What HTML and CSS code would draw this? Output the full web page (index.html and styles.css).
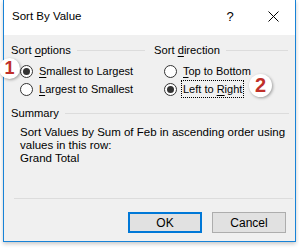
FILE: index.html
```html
<!DOCTYPE html>
<html>
<head>
<meta charset="utf-8">
<link rel="stylesheet" href="styles.css">
</head>
<body>
<div class="window">
  <div class="titlebar">
    <span class="title">Sort By Value</span>
    <span class="help">?</span>
    <span class="close">
      <svg width="11" height="11" viewBox="0 0 11 11"><path d="M0.5 0.5 L10.5 10.5 M10.5 0.5 L0.5 10.5" stroke="#000" stroke-width="1" fill="none"/></svg>
    </span>
  </div>
  <div class="content">
    <div class="groups">
      <div class="group">
        <div class="group-head"><span>Sort <u>o</u>ptions</span><i class="rule"></i></div>
        <div class="radio-row checked"><span class="radio"></span><span class="label"><u>S</u>mallest to Largest</span></div>
        <div class="radio-row"><span class="radio"></span><span class="label"><u>L</u>argest to Smallest</span></div>
      </div>
      <div class="group">
        <div class="group-head"><span>Sort <u>d</u>irection</span><i class="rule"></i></div>
        <div class="radio-row"><span class="radio"></span><span class="label"><u>T</u>op to Bottom</span></div>
        <div class="radio-row checked"><span class="radio"></span><span class="label focus">Left to <u>R</u>ight</span></div>
      </div>
    </div>
    <div class="group-head summary-head"><span>Summary</span><i class="rule"></i></div>
    <div class="summary">Sort Values by Sum of Feb in ascending order using<br>values in this row:<br>Grand Total</div>
    <div class="footer">
      <div class="separator"></div>
      <div class="buttons">
        <button class="btn default">OK</button>
        <button class="btn">Cancel</button>
      </div>
    </div>
  </div>
  <span class="badge badge-1">1</span>
  <span class="badge badge-2">2</span>
</div>
</body>
</html>
```
FILE: styles.css
```css
html, body {
  margin: 0;
  padding: 0;
  background: #ffffff;
}
body {
  font-family: "Segoe UI", "Liberation Sans", Arial, sans-serif;
  font-size: 11px;
  color: #000;
  width: 299px;
  height: 248px;
  overflow: hidden;
  white-space: nowrap;
}
.window {
  position: relative;
  margin-left: 3px;
  width: 293px;
  height: 242px;
  box-sizing: border-box;
  border: 1px solid #1883d7;
  border-top: none;
  display: flex;
  flex-direction: column;
  box-shadow: 0 2px 4px rgba(0, 0, 0, 0.22);
  background: #f0f0f0;
}
.titlebar {
  height: 35px;
  flex: none;
  background: #ffffff;
  display: flex;
  align-items: center;
  padding-left: 8px;
  padding-bottom: 3px;
  box-sizing: border-box;
}
.title {
  font-size: 11.5px;
}
.help {
  margin-left: auto;
  font-size: 13px;
  width: 10px;
  text-align: center;
}
.close {
  display: flex;
  margin-left: 33px;
  margin-right: 16px;
}
.content {
  flex: 1;
  display: flex;
  flex-direction: column;
  padding: 7px 6px 8px 7px;
}
.groups {
  display: grid;
  grid-template-columns: 134px 134px;
  column-gap: 9px;
}
.group-head {
  display: flex;
  align-items: center;
  height: 16px;
  line-height: 16px;
  margin-bottom: 4px;
  font-size: 11.2px;
}
.group-head u, .label u {
  text-decoration-thickness: 1px;
  text-underline-offset: 2px;
}
.rule {
  flex: 1;
  height: 1px;
  background: #dcdcdc;
  margin-left: 6px;
}
.radio-row {
  display: flex;
  align-items: center;
  height: 18px;
  padding-left: 9px;
}
.group + .group .radio-row {
  padding-left: 10px;
}
.radio {
  flex: none;
  width: 13px;
  height: 13px;
  box-sizing: border-box;
  border: 1px solid #333333;
  border-radius: 50%;
  background: #ffffff;
  display: flex;
  align-items: center;
  justify-content: center;
  margin-right: 4px;
}
.checked .radio::after {
  content: "";
  width: 7px;
  height: 7px;
  border-radius: 50%;
  background: #333333;
}
.label {
  line-height: 16px;
  border: 1px solid transparent;
  padding: 0 1px;
}
.label.focus {
  border: 1px dotted #000;
}
.summary-head {
  margin-top: 7px;
  margin-bottom: 5px;
}
.summary {
  padding-left: 9px;
  line-height: 13px;
  font-size: 11.5px;
}
.footer {
  margin-top: auto;
}
.separator {
  height: 1px;
  background: #dcdcdc;
  margin: 0 0 13px 3px;
  width: 279px;
}
.buttons {
  display: flex;
  justify-content: flex-end;
  gap: 10px;
  padding-right: 3px;
}
.btn {
  font-family: inherit;
  font-size: 12px;
  width: 74px;
  height: 21px;
  box-sizing: border-box;
  background: #e1e1e1;
  border: 1px solid #adadad;
  padding: 0;
  color: #000;
}
.btn.default {
  border: 2px solid #0078d7;
}
.badge {
  position: absolute;
  width: 21px;
  height: 21px;
  border-radius: 50%;
  background: #ffffff;
  box-shadow: 1px 1px 3px rgba(0, 0, 0, 0.35);
  color: #c0302a;
  font-family: "Liberation Sans", Arial, sans-serif;
  font-weight: bold;
  font-size: 18px;
  line-height: 21px;
  text-align: center;
}
.badge-1 {
  left: -5px;
  top: 58px;
}
.badge-2 {
  left: 245px;
  top: 74px;
  width: 23px;
  height: 23px;
  line-height: 23px;
  font-size: 20px;
}
```
